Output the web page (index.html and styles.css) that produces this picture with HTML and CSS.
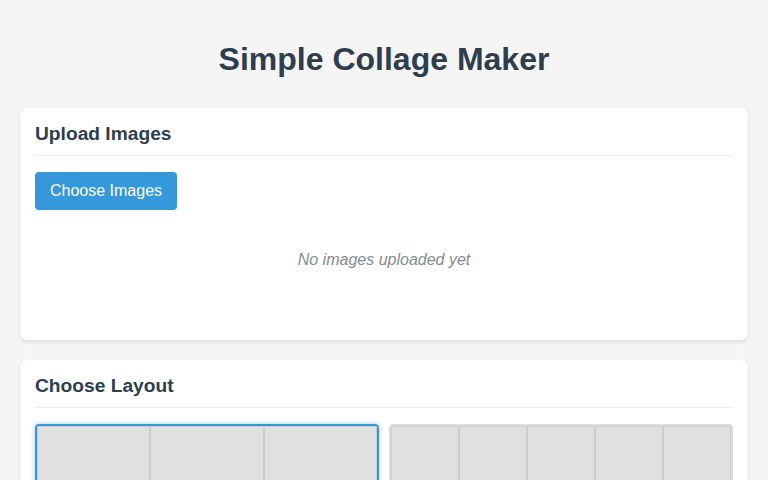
FILE: index.html
```html
<!DOCTYPE html>
<html lang="en">
<head>
<meta charset="utf-8">
<title>Simple Collage Maker</title>
<link rel="stylesheet" href="styles.css">
</head>
<body>
<div class="container">
  <h1 class="title">Simple Collage Maker</h1>

  <section class="card">
    <h2 class="card-title">Upload Images</h2>
    <button class="btn" type="button">Choose Images</button>
    <div class="preview">
      <p class="empty">No images uploaded yet</p>
    </div>
  </section>

  <section class="card">
    <h2 class="card-title">Choose Layout</h2>
    <div class="layouts">
      <div class="layout selected">
        <div class="cells cols-3">
          <div class="cell"></div><div class="cell"></div><div class="cell"></div>
          <div class="cell"></div><div class="cell"></div><div class="cell"></div>
        </div>
      </div>
      <div class="layout">
        <div class="cells cols-5">
          <div class="cell"></div><div class="cell"></div><div class="cell"></div><div class="cell"></div><div class="cell"></div>
          <div class="cell"></div><div class="cell"></div><div class="cell"></div><div class="cell"></div><div class="cell"></div>
        </div>
      </div>
    </div>
  </section>
</div>
</body>
</html>
```

FILE: styles.css
```css
* { box-sizing: border-box; }

body {
  margin: 0;
  padding: 20px;
  background: #f5f5f5;
  font-family: "Liberation Sans", Arial, sans-serif;
  color: #333;
}

.title {
  margin: 21px 0 30px;
  text-align: center;
  font-size: 32px;
  font-weight: bold;
  color: #2c3e50;
}

.card {
  background: #fff;
  border-radius: 8px;
  box-shadow: 0 2px 4px rgba(0, 0, 0, 0.1);
  padding: 15px;
  margin-bottom: 20px;
}

.card-title {
  margin: 0 0 16px;
  padding-bottom: 10px;
  border-bottom: 1px solid #eee;
  font-size: 19.2px;
  font-weight: bold;
  color: #2c3e50;
}

.btn {
  display: inline-block;
  padding: 10px 15px;
  border: none;
  border-radius: 4px;
  background: #3498db;
  color: #fff;
  font-family: inherit;
  font-size: 16px;
  line-height: 18px;
  cursor: pointer;
}

.preview {
  margin-top: 15px;
  min-height: 100px;
}

.empty {
  margin: 0;
  padding-top: 26px;
  text-align: center;
  font-style: italic;
  color: #7f8c8d;
  font-size: 16px;
}

.layouts {
  display: grid;
  grid-template-columns: 1fr 1fr;
  gap: 10px;
}

.layout {
  border: 2px solid #ddd;
  border-radius: 4px;
  overflow: hidden;
  height: 200px;
}

.layout.selected {
  border-color: #3498db;
  box-shadow: 0 0 5px rgba(52, 152, 219, 0.5);
}

.cells {
  display: grid;
  height: 100%;
}

.cols-3 { grid-template-columns: repeat(3, 1fr); }
.cols-5 { grid-template-columns: repeat(5, 1fr); }

.cell {
  background: #e0e0e0;
  border: 1px solid #ccc;
}
```
